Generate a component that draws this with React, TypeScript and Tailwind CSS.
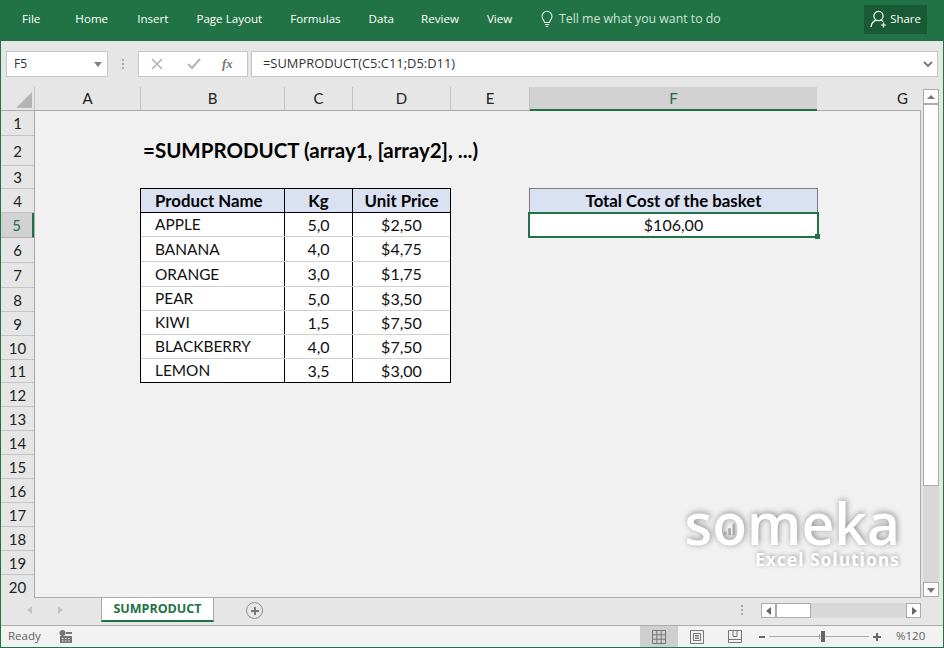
import React from "react";

const rowHeights = [25, 30, 23, 24, 25, 25, 25, 24, 24, 24, 23, 24, 24, 24, 24, 24, 24, 24, 24, 24];
const products: [string, string, string, number][] = [
  ["APPLE", "5,0", "$2,50", 24],
  ["BANANA", "4,0", "$4,75", 25],
  ["ORANGE", "3,0", "$1,75", 25],
  ["PEAR", "5,0", "$3,50", 24],
  ["KIWI", "1,5", "$7,50", 24],
  ["BLACKBERRY", "4,0", "$7,50", 24],
  ["LEMON", "3,5", "$3,00", 23],
];
const colHeaders: [string, number][] = [
  ["A", 106], ["B", 144], ["C", 68], ["D", 98], ["E", 79], ["F", 288],
];

function Tab({ label, ml }: { label: string; ml: string }) {
  return <span className={`${ml} text-[11.6px] text-white`}>{label}</span>;
}

function Arrow({ d }: { d: string }) {
  return (
    <svg width="10" height="10" viewBox="0 0 10 10"><path d={d} fill="currentColor" /></svg>
  );
}

export default function App() {
  return (
    <div className="w-[944px] h-[648px] flex flex-col overflow-hidden bg-[#e6e6e6] border-x border-b border-[#217346] font-['Open_Sans',sans-serif] text-[#444]">
      {/* Ribbon tabs */}
      <div className="h-[41px] -mx-px shrink-0 bg-[#217346] flex items-center">
        <div className="flex items-center -mt-[3px] w-[530px] shrink-0">
          <Tab label="File" ml="ml-[22px]" />
          <Tab label="Home" ml="ml-[35px]" />
          <Tab label="Insert" ml="ml-[29px]" />
          <Tab label="Page Layout" ml="ml-[28px]" />
          <Tab label="Formulas" ml="ml-[28px]" />
          <Tab label="Data" ml="ml-[28px]" />
          <Tab label="Review" ml="ml-[27px]" />
          <Tab label="View" ml="ml-[28px]" />
        </div>
        <div className="flex items-center ml-[10px] -mt-[3px] text-[#cfe2d7] text-[12.3px] gap-[5px]">
          <svg width="14" height="18" viewBox="0 0 14 18" fill="none" stroke="#e8f1ec" strokeWidth="1.1">
            <path d="M4.5 12.5c0-2-2.5-3-2.5-6.2a5 5 0 0 1 10 0c0 3.2-2.5 4.2-2.5 6.2z" />
            <path d="M5 14.5h4M5.8 16.5h2.4" />
          </svg>
          <span>Tell me what you want to do</span>
        </div>
        <div className="ml-auto mr-[17px] -mt-[3px] w-[63px] h-[29px] bg-[#185a34] flex items-center justify-center gap-[2px] text-white text-[11.4px]">
          <svg width="18" height="18" viewBox="0 0 18 18" fill="none" stroke="#fff" strokeWidth="1.2">
            <circle cx="8.5" cy="6" r="4.6" />
            <path d="M1 17c.5-3.8 2.5-6 5-6.6M11 10.4c1 .2 1.6.6 2.2 1.2" />
            <path d="M13.5 12.5v5M11 15h5" />
          </svg>
          <span>Share</span>
        </div>
      </div>

      {/* Formula bar */}
      <div className="h-[46px] shrink-0 flex items-start pt-[10px] pl-[5px] pr-[5px]">
        <div className="w-[102px] h-[26px] bg-white border border-[#c6c6c6] flex items-center justify-between pl-[7px] pr-[5px] text-[12px] text-[#333]">
          <span>F5</span>
          <span className="w-0 h-0 border-x-[4px] border-x-transparent border-t-[5px] border-t-[#808080]" />
        </div>
        <div className="w-[30px] h-[26px] flex flex-col items-center justify-center gap-[2px]">
          <span className="w-[2px] h-[2px] bg-[#aaa]" />
          <span className="w-[2px] h-[2px] bg-[#aaa]" />
          <span className="w-[2px] h-[2px] bg-[#aaa]" />
        </div>
        <div className="w-[110px] h-[26px] bg-white border border-[#c6c6c6] flex items-center text-[#b4b4b4]">
          <svg className="ml-[12px]" width="12" height="12" viewBox="0 0 12 12" stroke="currentColor" strokeWidth="1.6" fill="none"><path d="M1 1l10 10M11 1L1 11" /></svg>
          <svg className="ml-[24px]" width="14" height="12" viewBox="0 0 14 12" stroke="currentColor" strokeWidth="2" fill="none"><path d="M1 6l4 4 8-9" /></svg>
          <span className="ml-[21px] text-[13px] italic font-['Liberation_Serif',serif] text-[#777] font-bold">fx</span>
        </div>
        <div className="ml-[3px] w-[687px] h-[26px] bg-white border border-[#c6c6c6] flex items-center justify-between pl-[11px] pr-[4px] text-[12.9px] text-[#333]">
          <span>=SUMPRODUCT(C5:C11;D5:D11)</span>
          <svg width="10" height="7" viewBox="0 0 10 7" fill="none" stroke="#777" strokeWidth="1.8"><path d="M1 1l4 4 4-4" /></svg>
        </div>
      </div>

      {/* Sheet area */}
      <div className="h-[511px] shrink-0 flex">
        <div className="flex-1 min-w-0 flex flex-col">
          {/* Column header */}
          <div className="h-[24px] shrink-0 flex font-['Lato',sans-serif] text-[15px] text-[#222] border-b border-[#ababab]">
            <div className="w-[34px] shrink-0 relative border-r border-[#c4c4c4]">
              <span className="absolute right-[2px] bottom-[2px] w-0 h-0 border-l-[16px] border-l-transparent border-b-[16px] border-b-[#b4b4b4]" />
            </div>
            {colHeaders.map(([c, w]) =>
              c === "F" ? (
                <div key={c} style={{ width: w - 1 }} className="shrink-0 bg-[#d2d2d2] border-b-2 border-[#217346] -mb-px flex items-center justify-center text-[#1c6b4a]">{c}</div>
              ) : (
                <div key={c} style={{ width: w }} className="shrink-0 border-r border-[#c4c4c4] flex items-center justify-center">{c}</div>
              )
            )}
            <div className="flex-1 flex items-center justify-end pr-[13px]">G</div>
          </div>

          <div className="flex-1 flex min-h-0">
            {/* Row header */}
            <div className="w-[34px] shrink-0 flex flex-col font-['Lato',sans-serif] text-[15px] text-[#222] border-r border-[#ababab] overflow-hidden">
              {rowHeights.map((h, i) =>
                i === 4 ? (
                  <div key={i} style={{ height: h }} className="shrink-0 bg-[#d2d2d2] border-r-2 border-[#217346] border-b border-b-[#b4b4b4] flex items-center justify-center text-[#1c6b4a]">{i + 1}</div>
                ) : (
                  <div key={i} style={{ height: h }} className="shrink-0 border-b border-[#c4c4c4] flex items-center justify-center pt-[1px]">{i + 1}</div>
                )
              )}
            </div>

            {/* Grid */}
            <div className="flex-1 relative bg-[#f1f1f1] border-r border-[#ababab] border-b font-['Lato',sans-serif] text-[16px] text-[#111]">
              <div className="h-[24px]" />
              <div className="h-[31px] flex items-center pl-[108px] text-[20.5px] font-bold text-black">
                =SUMPRODUCT (array1, [array2], ...)
              </div>
              <div className="h-[22px]" />
              <div className="flex items-start pl-[105px]">
                {/* Data table */}
                <div className="w-[311px] border border-black bg-white flex flex-col">
                  <div className="h-[24px] flex bg-[#d9e1f2] font-bold text-[16.8px] border-b border-black text-black">
                    <div className="w-[144px] pl-[14px] flex items-center border-r border-black">Product Name</div>
                    <div className="w-[68px] flex items-center justify-center border-r border-black">Kg</div>
                    <div className="flex-1 flex items-center justify-center">Unit Price</div>
                  </div>
                  {products.map((p, i) => (
                    <div key={p[0]} style={{ height: p[3] }} className={`flex ${i < products.length - 1 ? "border-b border-[#d0d0d0]" : ""}`}>
                      <div className="w-[144px] pl-[14px] pt-[1px] flex items-center border-r border-black text-[15.4px]">{p[0]}</div>
                      <div className="w-[68px] flex items-center justify-center border-r border-black">{p[1]}</div>
                      <div className="flex-1 flex items-center justify-center">{p[2]}</div>
                    </div>
                  ))}
                </div>
                {/* Result */}
                <div className="ml-[78px] w-[289px] flex flex-col">
                  <div className="h-[24px] bg-[#d9e1f2] border-x border-t border-[#7a7a7a] font-bold text-[16.8px] flex items-center justify-center text-black">Total Cost of the basket</div>
                  <div className="relative h-[26px] -ml-px w-[291px] bg-white border-2 border-[#217346] flex items-center justify-center">
                    $106,00
                    <span className="absolute -right-[3px] -bottom-[3px] w-[5px] h-[5px] bg-[#217346]" />
                  </div>
                </div>
              </div>

              {/* Watermark */}
              <div className="absolute right-[20px] bottom-[29px] flex flex-col items-end font-['Open_Sans',sans-serif] text-white leading-none">
                <span className="relative text-[57px] leading-[50px] font-semibold [text-shadow:1px_-1px_6px_#8a8a8a]">
                  someka
                  <svg className="absolute left-[38px] top-[24px]" width="14" height="14" viewBox="0 0 16 16" fill="#a8a8a8">
                    <path d="M1 11h3v4H1zM6 7h3v8H6zM11 2h3v13h-3z" />
                  </svg>
                </span>
                <span className="text-[17px] font-bold tracking-[1.2px] mt-[3px] [text-shadow:1px_-1px_4px_#9a9a9a]">Excel Solutions</span>
              </div>
            </div>
          </div>
        </div>

        {/* Vertical scrollbar */}
        <div className="w-[22px] shrink-0 pt-[2px] pl-[2px] pr-[4px] flex flex-col text-[#777] bg-[#e6e6e6]">
          <div className="h-[15px] bg-white border border-[#ababab] flex items-center justify-center"><Arrow d="M5 3l4 4H1z" /></div>
          <div className="flex-1 bg-[#d8d8d8] flex flex-col">
            <div className="h-[382px] bg-white border border-[#ababab]" />
          </div>
          <div className="h-[15px] bg-white border border-[#ababab] flex items-center justify-center mb-[1px]"><Arrow d="M5 8L1 3h8z" /></div>
        </div>
      </div>

      {/* Sheet tabs */}
      <div className="h-[29px] shrink-0 flex items-start border-b border-[#ababab] -mt-[1px]">
        <div className="w-[100px] h-[25px] flex items-center pl-[24px] gap-[20px] text-[#c4c4c4] pt-[1px]">
          <Arrow d="M7 1v8L2 5z" />
          <Arrow d="M3 1v8l5-4z" />
        </div>
        <div className="w-[113px] h-[25px] pt-[2px] bg-white border-x border-[#ababab] border-b-2 border-b-[#217346] flex items-center justify-center text-[12.5px] font-bold text-[#217346]">SUMPRODUCT</div>
        <div className="ml-[32px] mt-[5px] w-[17px] h-[17px] rounded-full border-[1.5px] border-[#8a8a8a] flex items-center justify-center">
          <svg width="10" height="10" viewBox="0 0 10 10" stroke="#777" strokeWidth="2"><path d="M5 1v8M1 5h8" /></svg>
        </div>
        <div className="ml-auto flex items-start">
          <div className="mt-[8px] mr-[18px] flex flex-col gap-[2px]">
            <span className="w-[2px] h-[2px] bg-[#aaa]" />
            <span className="w-[2px] h-[2px] bg-[#aaa]" />
            <span className="w-[2px] h-[2px] bg-[#aaa]" />
          </div>
          <div className="mt-[6px] mr-[22px] w-[160px] h-[15px] bg-[#d8d8d8] flex text-[#666]">
            <div className="w-[15px] bg-white border border-[#ababab] flex items-center justify-center"><Arrow d="M7 1v8L2 5z" /></div>
            <div className="w-[35px] bg-white border border-[#ababab]" />
            <div className="ml-auto w-[15px] bg-white border border-[#ababab] flex items-center justify-center"><Arrow d="M3 1v8l5-4z" /></div>
          </div>
        </div>
      </div>

      {/* Status bar */}
      <div className="flex-1 flex items-center bg-[#f2f2f2] text-[11.5px] text-[#5f5f5f]">
        <span className="ml-[7px] -mt-[2px]">Ready</span>
        <svg className="ml-[18px]" width="14" height="14" viewBox="0 0 14 14" fill="#777">
          <circle cx="3.5" cy="3" r="3" />
          <path d="M7 2h6v2H7zM1 6h12v7H1z" />
          <path d="M3 8h1.5v1H3zM6 8h1.5v1H6zM9 8h1.5v1H9zM3 10.5h1.5v1H3zM6 10.5h1.5v1H6zM9 10.5h1.5v1H9z" fill="#f2f2f2" />
        </svg>
        <div className="ml-auto flex items-center h-full">
          <div className="w-[38px] h-full bg-[#cfcfcf] flex items-center justify-center">
            <svg width="14" height="14" viewBox="0 0 14 14" fill="none" stroke="#777"><path d="M.5.5h13v13H.5zM.5 4.8h13M.5 9.2h13M4.8.5v13M9.2.5v13" /></svg>
          </div>
          <div className="w-[38px] flex items-center justify-center">
            <svg width="14" height="14" viewBox="0 0 14 14" fill="none" stroke="#777"><path d="M.5.5h13v13H.5zM3.5 3.5h7v7h-7zM5 5.5h4M5 7h4M5 8.5h4" /></svg>
          </div>
          <div className="w-[38px] flex items-center justify-center">
            <svg width="14" height="14" viewBox="0 0 14 14" fill="none" stroke="#777"><path d="M.5.5h13v12H.5zM.5 9.5h13M5 .5v6h4v-6" /></svg>
          </div>
          <span className="ml-[5px] w-[6px] h-[2px] bg-[#666]" />
          <div className="relative mx-[4px] w-[100px] h-px bg-[#aaa]">
            <span className="absolute left-[52px] -top-[5px] w-[4px] h-[11px] bg-[#666]" />
            <span className="absolute left-[50px] -top-[2px] w-px h-[5px] bg-[#aaa]" />
          </div>
          <svg width="8" height="8" viewBox="0 0 8 8" stroke="#666" strokeWidth="2"><path d="M4 0v8M0 4h8" /></svg>
          <span className="ml-[15px] mr-[19px] w-[28px] -mt-[2px]">%120</span>
        </div>
      </div>
    </div>
  );
}
